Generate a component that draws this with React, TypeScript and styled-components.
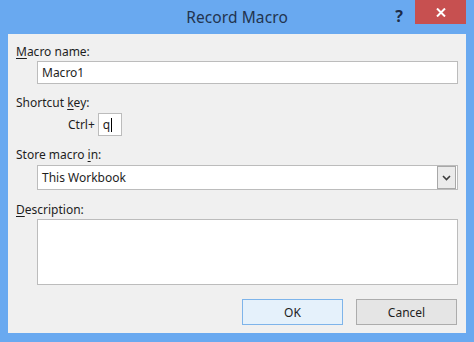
import styled, { createGlobalStyle } from 'styled-components';

const GlobalStyle = createGlobalStyle`
  html, body {
    margin: 0;
    padding: 0;
    background: #69a9f0;
  }
  body {
    font-family: "Segoe UI", "Noto Sans", "Open Sans", sans-serif;
  }
`;

const Window = styled.div`
  width: 474px;
  height: 342px;
  box-sizing: border-box;
  background: #69a9f0;
  display: flex;
  flex-direction: column;
  padding: 0 8px 9px 8px;
`;

const TitleBar = styled.div`
  height: 34px;
  position: relative;
  display: flex;
  justify-content: center;
  align-items: flex-start;
`;

const Title = styled.div`
  margin-top: 6px;
  font-size: 15.5px;
  color: #22344f;
  letter-spacing: 0.1px;
`;

const Help = styled.div`
  position: absolute;
  right: 63px;
  top: 5px;
  font-family: "Noto Sans", sans-serif;
  font-weight: bold;
  font-size: 16px;
  color: #1c2c48;
  line-height: 22px;
`;

const CloseButton = styled.div`
  position: absolute;
  right: 0;
  top: 0;
  width: 51px;
  height: 24px;
  background: #c75050;
  display: flex;
  align-items: center;
  justify-content: center;
`;

const Panel = styled.div`
  flex: 1;
  background: #f0f0f0;
  display: flex;
  flex-direction: column;
  padding: 10px 0 8px 8px;
  font-size: 12px;
  color: #1e1e1e;
`;

const Label = styled.div<{ $gap?: number }>`
  height: 16px;
  line-height: 16px;
  margin-top: ${p => p.$gap ?? 0}px;
  u { text-decoration: underline; text-underline-offset: 2px; }
`;

const Field = styled.div<{ $h: number; $gap?: number }>`
  margin-left: 21px;
  margin-top: ${p => p.$gap ?? 1}px;
  width: 421px;
  height: ${p => p.$h}px;
  box-sizing: border-box;
  background: #fff;
  border: 1px solid #bcbcbc;
  display: flex;
  align-items: center;
  padding-left: 4px;
`;

const SelectField = styled(Field)`
  padding-right: 1px;
  justify-content: space-between;
`;

const ArrowButton = styled.div`
  width: 19px;
  height: 23px;
  box-sizing: border-box;
  border: 1px solid #a8a8a8;
  background: #ebebeb;
  display: flex;
  align-items: center;
  justify-content: center;
`;

const ShortcutRow = styled.div`
  display: flex;
  align-items: center;
  margin-top: 2px;
  margin-left: 52px;
  gap: 3px;
`;

const KeyBox = styled.div`
  width: 24px;
  height: 23px;
  box-sizing: border-box;
  background: #fff;
  border: 1px solid #bcbcbc;
  display: flex;
  align-items: center;
  padding-left: 4px;
`;

const Caret = styled.span`
  display: inline-block;
  width: 1px;
  height: 14px;
  background: #000;
  margin-left: 1px;
`;

const ButtonRow = styled.div`
  display: flex;
  justify-content: flex-end;
  gap: 13px;
  margin-top: 14px;
  padding-right: 9px;
`;

const Button = styled.div<{ $primary?: boolean }>`
  width: 101px;
  height: 26px;
  box-sizing: border-box;
  border: 1px solid ${p => (p.$primary ? '#7eb4ea' : '#acacac')};
  background: ${p => (p.$primary ? '#e5f1fb' : '#e5e5e5')};
  display: flex;
  align-items: center;
  justify-content: center;
`;

export default function App() {
  return (
    <>
      <GlobalStyle />
      <Window>
        <TitleBar>
          <Title>Record Macro</Title>
          <Help>?</Help>
          <CloseButton>
            <svg width="10" height="9" viewBox="0 0 10 9">
              <path d="M1 0.5 L9 8.5 M9 0.5 L1 8.5" stroke="#fff" strokeWidth="2" />
            </svg>
          </CloseButton>
        </TitleBar>
        <Panel>
          <Label><u>M</u>acro name:</Label>
          <Field $h={23}>Macro1</Field>
          <Label $gap={11}>Shortcut <u>k</u>ey:</Label>
          <ShortcutRow>
            <span>Ctrl+</span>
            <KeyBox>q<Caret /></KeyBox>
          </ShortcutRow>
          <Label $gap={11}>Store macro <u>i</u>n:</Label>
          <SelectField $h={25} $gap={2}>
            <span>This Workbook</span>
            <ArrowButton>
              <svg width="9" height="6" viewBox="0 0 9 6">
                <path d="M1 1 L4.5 4.5 L8 1" stroke="#3c3c3c" strokeWidth="1.6" fill="none" />
              </svg>
            </ArrowButton>
          </SelectField>
          <Label $gap={12}><u>D</u>escription:</Label>
          <Field $h={66} />
          <ButtonRow>
            <Button $primary>OK</Button>
            <Button>Cancel</Button>
          </ButtonRow>
        </Panel>
      </Window>
    </>
  );
}
